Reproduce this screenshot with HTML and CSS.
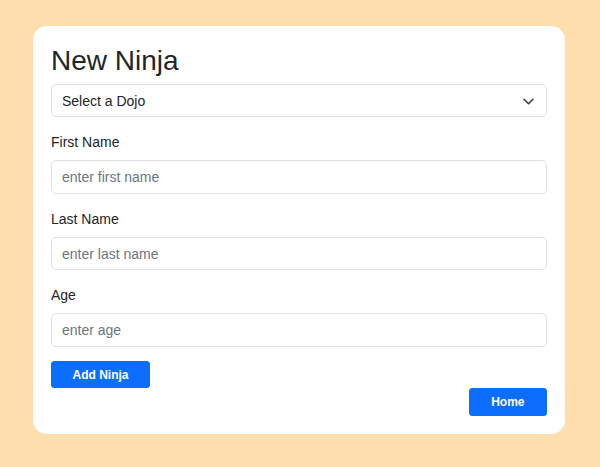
FILE: index.html
```html
<!DOCTYPE html>
<html lang="en">
<head>
<meta charset="utf-8">
<title>New Ninja</title>
<link rel="stylesheet" href="styles.css">
</head>
<body>
  <div class="card">
    <h2 class="title">New Ninja</h2>
    <div class="select-wrap">
      <select class="select">
        <option>Select a Dojo</option>
      </select>
      <svg class="chevron" width="11" height="7" viewBox="0 0 11 7" aria-hidden="true">
        <path d="M1 1.2l4.5 4.5 4.5-4.5" fill="none" stroke="#343a40" stroke-width="1.5" stroke-linecap="round" stroke-linejoin="round"/>
      </svg>
    </div>
    <div class="field">
      <label class="label" for="first">First Name</label>
      <input class="input" id="first" type="text" placeholder="enter first name">
    </div>
    <div class="field">
      <label class="label" for="last">Last Name</label>
      <input class="input" id="last" type="text" placeholder="enter last name">
    </div>
    <div class="field">
      <label class="label" for="age">Age</label>
      <input class="input" id="age" type="text" placeholder="enter age">
    </div>
    <div class="actions">
      <button class="btn" type="button">Add Ninja</button>
    </div>
    <div class="footer">
      <button class="btn btn-home" type="button">Home</button>
    </div>
  </div>
</body>
</html>
```

FILE: styles.css
```css
* {
  box-sizing: border-box;
}

html, body {
  margin: 0;
  padding: 0;
}

body {
  background: #ffdead;
  font-family: "Liberation Sans", Arial, sans-serif;
  color: #212529;
  height: 467px;
  padding-top: 26px;
}

.card {
  width: 532px;
  margin-left: 33px;
  background: #ffffff;
  border-radius: 14px;
  padding: 18px;
}

.title {
  margin: 0 0 6.4px;
  font-size: 28px;
  line-height: 33.6px;
  font-weight: 500;
  color: #212529;
}

.select-wrap {
  position: relative;
  height: 33.5px;
}

.select {
  appearance: none;
  -webkit-appearance: none;
  display: block;
  width: 100%;
  height: 33.5px;
  margin: 0;
  padding: 0 36px 0 10px;
  font-family: inherit;
  font-size: 14px;
  color: #212529;
  background: #fff;
  border: 1px solid #dee2e6;
  border-radius: 5px;
  outline: none;
}

.chevron {
  position: absolute;
  right: 13px;
  top: 14px;
}

.field {
  margin-top: 15px;
}

.label {
  display: block;
  font-size: 14px;
  line-height: 21px;
  margin-bottom: 7px;
  color: #212529;
}

.input {
  display: block;
  width: 100%;
  height: 33.5px;
  margin: 0;
  padding: 0 10px;
  font-family: inherit;
  font-size: 14px;
  color: #212529;
  background: #fff;
  border: 1px solid #dee2e6;
  border-radius: 5px;
  outline: none;
}

.input::placeholder {
  color: #6c757d;
  opacity: 1;
}

.actions {
  margin-top: 14px;
  display: flex;
}

.footer {
  display: flex;
  justify-content: flex-end;
}

.btn {
  height: 27.5px;
  padding: 0 20.5px;
  margin: 0;
  font-family: inherit;
  font-size: 12px;
  font-weight: 700;
  color: #ffffff;
  background: #0d6efd;
  border: 1px solid #0d6efd;
  border-radius: 3px;
  line-height: 1;
}

.btn-home {
  padding: 0 21.5px;
}
```
